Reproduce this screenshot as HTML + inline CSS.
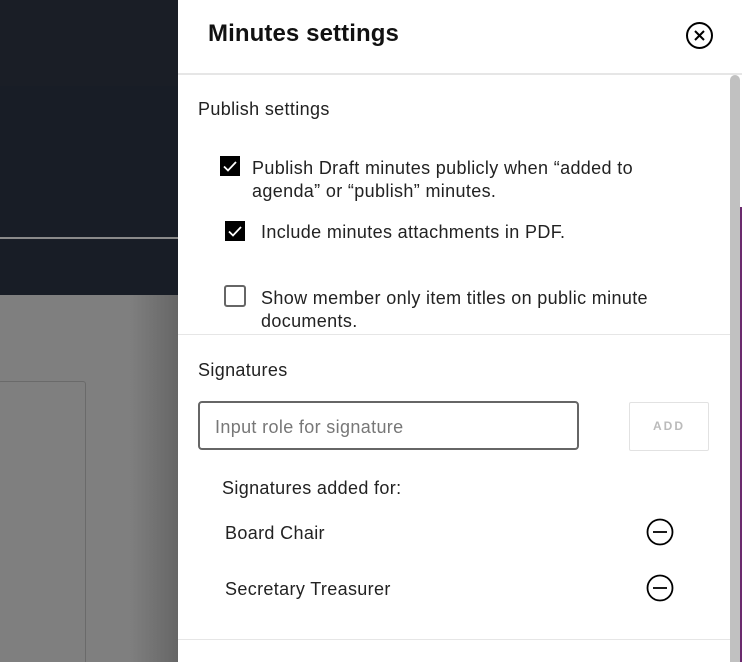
<!DOCTYPE html>
<html><head><style>
*{margin:0;padding:0;box-sizing:border-box}
html,body{width:742px;height:662px;overflow:hidden}
body{position:relative;font-family:"Liberation Sans",sans-serif;background:#7f7f7f}
.a{position:absolute}
.t{position:absolute;font-size:18px;color:#222;white-space:nowrap;letter-spacing:0.35px}
.cb{position:absolute;width:20px;height:20px;background:#000}
.cb svg{position:absolute;left:0;top:0}
</style></head><body>
<div class="a" style="left:0;top:0;width:178px;height:86px;background:#1a1e26"></div>
<div class="a" style="left:0;top:86px;width:178px;height:209px;background:#181d26"></div>
<div class="a" style="left:0;top:237px;width:178px;height:2px;background:#8a8a8a"></div>
<div class="a" style="left:0;top:295px;width:178px;height:367px;background:linear-gradient(90deg,#7f7f7f 0,#7f7f7f 130px,#666 178px)"></div>
<div class="a" style="left:-2px;top:381px;width:88px;height:290px;border:1px solid #6a6a6a;border-radius:3px"></div>
<div class="a" style="left:178px;top:0;width:564px;height:662px;background:#fff"></div>
<div class="a" style="left:208px;top:20px;font-size:24px;font-weight:bold;color:#111;letter-spacing:0.1px">Minutes settings</div>
<svg class="a" style="left:685px;top:21px" width="29" height="29" viewBox="0 0 29 29"><circle cx="14.5" cy="14.5" r="12.5" fill="none" stroke="#000" stroke-width="2"/><path d="M10 10L19 19M19 10L10 19" stroke="#000" stroke-width="2"/></svg>
<div class="a" style="left:178px;top:73px;width:564px;height:2px;background:#e6e6e6"></div>
<div class="a" style="left:730px;top:75px;width:10px;height:587px;background:#c1c1c1;border-radius:5px 5px 0 0"></div>
<div class="a" style="left:740px;top:207px;width:2px;height:455px;background:#6b2a6e"></div>
<div class="t" style="left:198px;top:99px">Publish settings</div>
<div class="cb" style="left:220px;top:156px"><svg width="20" height="20"><path d="M4 10.5L8 14.5L16 6" fill="none" stroke="#fff" stroke-width="1.8"/></svg></div>
<div class="t" style="left:252px;top:157px;line-height:23px">Publish Draft minutes publicly when “added to<br>agenda” or “publish” minutes.</div>
<div class="cb" style="left:225px;top:221px"><svg width="20" height="20"><path d="M4 10.5L8 14.5L16 6" fill="none" stroke="#fff" stroke-width="1.8"/></svg></div>
<div class="t" style="left:261px;top:222px">Include minutes attachments in PDF.</div>
<div class="a" style="left:224px;top:285px;width:22px;height:22px;border:2px solid #666;border-radius:3px"></div>
<div class="t" style="left:261px;top:287px;line-height:23px">Show member only item titles on public minute<br>documents.</div>
<div class="a" style="left:178px;top:334px;width:552px;height:1px;background:#e6e6e6"></div>
<div class="t" style="left:198px;top:360px">Signatures</div>
<div class="a" style="left:198px;top:401px;width:381px;height:49px;border:2px solid #666;border-radius:4px"></div>
<div class="t" style="left:215px;top:417px;color:#777">Input role for signature</div>
<div class="a" style="left:629px;top:402px;width:80px;height:49px;border:1px solid #e2e2e2;border-radius:2px;font-size:12px;font-weight:bold;color:#bbb;letter-spacing:2px;text-align:center;line-height:47px">ADD</div>
<div class="t" style="left:222px;top:478px">Signatures added for:</div>
<div class="t" style="left:225px;top:523px">Board Chair</div>
<div class="t" style="left:225px;top:579px">Secretary Treasurer</div>
<svg class="a" style="left:646px;top:518px" width="29" height="29"><circle cx="14" cy="14" r="12.5" fill="none" stroke="#000" stroke-width="1.8"/><path d="M7 14H21" stroke="#000" stroke-width="1.8"/></svg>
<svg class="a" style="left:646px;top:574px" width="29" height="29"><circle cx="14" cy="14" r="12.5" fill="none" stroke="#000" stroke-width="1.8"/><path d="M7 14H21" stroke="#000" stroke-width="1.8"/></svg>
<div class="a" style="left:178px;top:639px;width:552px;height:1px;background:#e6e6e6"></div>
</body></html>
